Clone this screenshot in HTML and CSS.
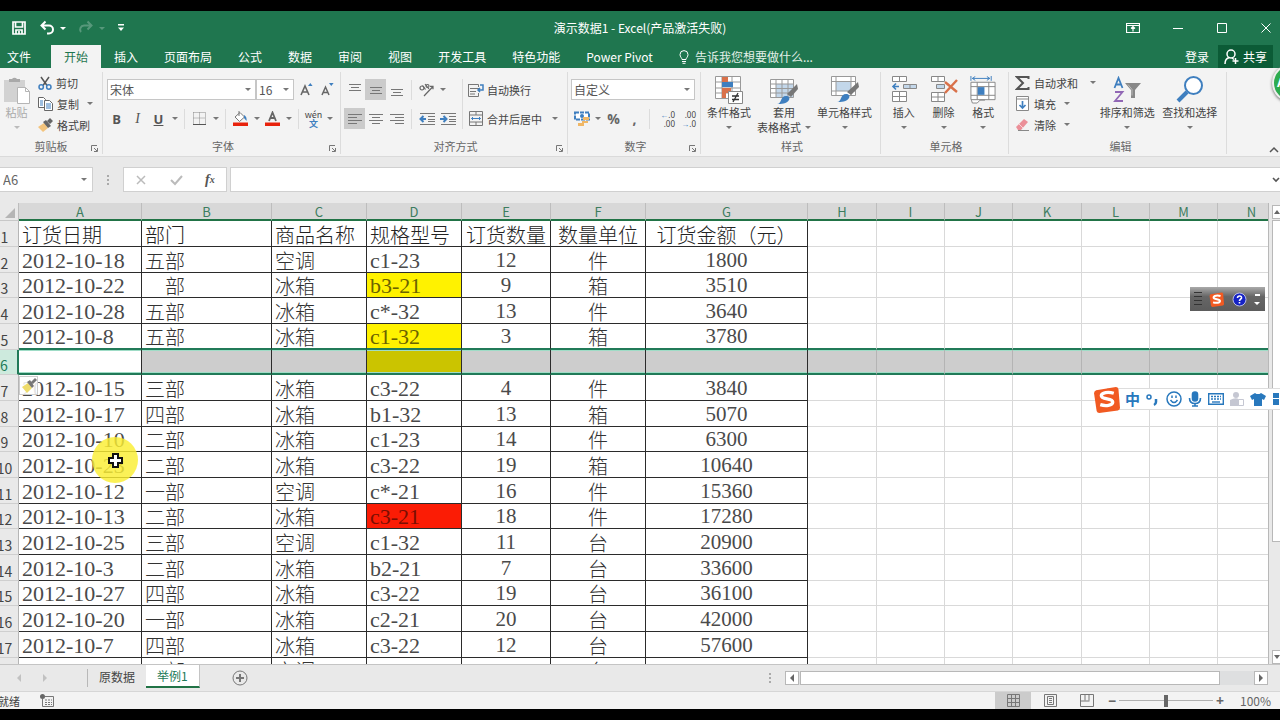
FILE: index.html
```html
<!DOCTYPE html>
<html lang="zh-CN">
<head>
<meta charset="utf-8">
<title>演示数据1 - Excel</title>
<link rel="stylesheet" href="styles.css">
</head>
<body>
<div class="app">
  <header class="top">
    <div class="titlebar">
      <div class="quick">
        <button aria-label="保存"><svg width="16" height="16" viewBox="0 0 16 16" fill="none" stroke="#fff" stroke-width="1.7"><path d="M2 2h12v12H2zM4.500 2v5h7V2M5 14v-4h6v4M8 11v3"/></svg></button>
        <button aria-label="撤消"><svg width="16" height="16" viewBox="0 0 16 16" fill="none" stroke="#fff" stroke-width="2"><path d="M6.500 1.500 2.500 5.500l4 4M3 5.500h7a4 4 0 0 1 0 8H8"/></svg><i class="ar"></i></button>
        <button aria-label="恢复" class="off"><svg width="16" height="16" viewBox="0 0 16 16" fill="none" stroke="#fff" stroke-width="2"><path d="m9.500 1.500 4 4-4 4M13 5.500H6a4 4 0 0 0-3 6.500"/></svg><i class="ar"></i></button>
        <button aria-label="自定义快速访问工具栏"><svg width="8" height="8" viewBox="0 0 8 8" fill="#fff"><path d="M1 0h6v1.500H1zM1 3.500h6L4 7z"/></svg></button>
      </div>
      <h1>演示数据1 - Excel(产品激活失败)</h1>
      <div class="win">
        <button aria-label="功能区显示选项"><svg width="14" height="12" viewBox="0 0 14 12" fill="none" stroke="#fff"><path d="M.5 1.500h13v9H.5zM.5 3.500h13M7 9.500v-5M5 6.500l2-2 2 2" stroke-width="1.200"/></svg></button>
        <button aria-label="最小化"><svg width="12" height="12" viewBox="0 0 12 12" stroke="#fff"><path d="M1 6.500h10"/></svg></button>
        <button aria-label="最大化"><svg width="12" height="12" viewBox="0 0 12 12" fill="none" stroke="#fff"><path d="M1.500 1.500h9v9h-9z"/></svg></button>
        <button aria-label="关闭"><svg width="12" height="12" viewBox="0 0 12 12" stroke="#fff"><path d="m1.500 1.500 9 9m0-9-9 9"/></svg></button>
      </div>
    </div>
    <nav class="tabs">
      <button class="file">文件</button><button class="on">开始</button><button>插入</button><button>页面布局</button><button>公式</button><button>数据</button><button>审阅</button><button>视图</button><button>开发工具</button><button>特色功能</button><button>Power Pivot</button>
      <button class="tell"><svg width="10" height="14" viewBox="0 0 10 14" fill="none" stroke="#fff"><path d="M3 9.500C3 8 1 7 1 4.600a4 4 0 0 1 8 0C9 7 7 8 7 9.500zM3 11.500h4M3.500 13.300h3"/></svg>告诉我您想要做什么...</button>
      <button class="login">登录</button>
      <button class="share"><svg width="15" height="16" viewBox="0 0 15 16" fill="none" stroke="#fff" stroke-width="1.500"><circle cx="7" cy="5" r="4"/><path d="M1 15c0-4 2-6 4.500-6.500M8 9l2 1.500M11.500 9v6M8.500 12h6"/></svg>共享</button>
    </nav>
  </header>

  <section class="ribbon">
    <div class="grp">
      <div class="body">
        <button class="big paste"><svg width="28" height="28" viewBox="0 0 28 28"><path d="M1 4h21v22H1z" fill="#d2d2d2"/><path d="M6 6V3h3a3 3 0 0 1 5 0h3v3z" fill="#a9a9a9"/><path d="M14.500 11.500h8l4 4v12h-12z" fill="#fff" stroke="#b5b5b5"/><path d="M22.500 11.500v4h4" fill="none" stroke="#b5b5b5"/></svg><span>粘贴</span><i class="ar"></i></button>
        <div class="stack">
          <button><svg width="14" height="14" viewBox="0 0 14 14" fill="none" stroke-width="1.500"><path d="m3 1 6 8.500M11 1 5 9.500" stroke="#555"/><circle cx="3.200" cy="11" r="2.200" stroke="#3f7fbf"/><circle cx="10.800" cy="11" r="2.200" stroke="#3f7fbf"/></svg>剪切</button>
          <button><svg width="15" height="14" viewBox="0 0 15 14" fill="#fff" stroke="#666"><path d="M.5.5h5l2 2v8h-7z"/><path d="M2 4h3M2 6h3M2 8h3" stroke="#3f7fbf"/><path d="M6.500 3.500h5l3 3v7h-8z"/><path d="M8 7h5M8 9h5M8 11h5" stroke="#3f7fbf"/></svg>复制<i class="ar"></i></button>
          <button><svg width="15" height="14" viewBox="0 0 15 14"><path d="m0 9 6-4 4 5-5 4z" fill="#f3c47d"/><path d="m5 4 3-2 5 6-3 2zM9 3l3-3 3 3-3 3z" fill="#666"/></svg>格式刷</button>
        </div>
      </div>
      <div class="cap">剪贴板<svg class="dl" viewBox="0 0 7 7"><path d="M.5 6V.5H6M3 3l3 3M6.500 3v3.500H3"/></svg></div>
    </div>

    <div class="grp g-font">
      <div class="body rows">
        <div class="row">
          <label class="combo c-font"><select aria-label="字体"><option>宋体</option></select><i class="ar"></i></label>
          <label class="combo c-size"><select aria-label="字号"><option>16</option></select><i class="ar"></i></label>
          <button class="b" aria-label="增大字号"><svg width="13" height="13" viewBox="0 0 13 13"><path d="M1 12 5 3l4 9M2.500 9h5" fill="none" stroke="#666" stroke-width="1.600"/><path d="m8 3 2.300-3L12.600 3z" fill="#3f7fbf"/></svg></button>
          <button class="b" aria-label="减小字号"><svg width="13" height="13" viewBox="0 0 13 13"><path d="m1 12 3.500-8L8 12M2.300 9.500h4.500" fill="none" stroke="#666" stroke-width="1.500"/><path d="m8 0 2.300 3L12.600 0z" fill="#3f7fbf"/></svg></button>
        </div>
        <div class="row">
          <button class="b bold">B</button><button class="b ital">I</button><button class="b under">U</button><button class="a" aria-label="下划线"><i class="ar"></i></button><i class="sep"></i>
          <button class="b" aria-label="边框"><svg width="13" height="13" viewBox="0 0 13 13" fill="none" stroke="#888"><path d="M.5.5v11M6.500.5v11M12.500.5v11M.5.5h12M.5 6h12" stroke-dasharray="1 1"/><path d="M0 12.500h13" stroke="#555"/></svg></button><button class="a" aria-label="更多边框"><i class="ar"></i></button><i class="sep"></i>
          <button class="b" aria-label="填充颜色"><svg width="15" height="15" viewBox="0 0 15 15"><path d="m2 6 5-4.500 4.500 4.500-5 4.500z" fill="#fff" stroke="#777"/><path d="M6 0v5" stroke="#777"/><path d="M11 4c2 1 3 3 2.500 6L11 7z" fill="#3f7fbf"/><path d="M0 11.500h15V15H0z" fill="#e8220c"/></svg></button><button class="a" aria-label="更多填充"><i class="ar"></i></button>
          <button class="b" aria-label="字体颜色"><svg width="15" height="15" viewBox="0 0 15 15"><path d="m4 10 3.500-8.500L11 10M5 7h5" fill="none" stroke="#666" stroke-width="1.800"/><path d="M0 11.500h15V15H0z" fill="#e8220c"/></svg></button><button class="a" aria-label="更多颜色"><i class="ar"></i></button><i class="sep"></i>
          <button class="b wen"><span>wén</span><span>文</span></button><button class="a" aria-label="拼音"><i class="ar"></i></button>
        </div>
      </div>
      <div class="cap">字体<svg class="dl" viewBox="0 0 7 7"><path d="M.5 6V.5H6M3 3l3 3M6.500 3v3.500H3"/></svg></div>
    </div>

    <div class="grp g-align">
      <div class="body">
        <div class="rows">
          <div class="row">
            <button class="b" aria-label="顶端对齐"><svg class="ln" viewBox="0 0 14 14"><path d="M1 1.500h12M3 4.500h8M1 7.500h12"/></svg></button><button class="b sel" aria-label="垂直居中"><svg class="ln" viewBox="0 0 14 14"><path d="M1 4.500h12M3 7.500h8M1 10.500h12"/></svg></button><button class="b" aria-label="底端对齐"><svg class="ln" viewBox="0 0 14 14"><path d="M1 6.500h12M3 9.500h8M1 12.500h12"/></svg></button><i class="sep"></i>
            <button class="b" aria-label="方向"><svg width="15" height="14" viewBox="0 0 15 14" fill="none" stroke="#666" stroke-width="1.200"><circle cx="3" cy="5" r="2"/><path d="m3.500 2.500 3 4"/><path d="m6 1 4 5"/><circle cx="8.500" cy="3" r="1.500"/><path d="M5 13 14 3.500M11 3.300h3v3"/></svg></button><button class="a" aria-label="更多方向"><i class="ar"></i></button>
          </div>
          <div class="row">
            <button class="b sel" aria-label="左对齐"><svg class="ln" viewBox="0 0 14 14"><path d="M0 2.500h14M0 5.500h9M0 8.500h14M0 11.500h9"/></svg></button><button class="b" aria-label="居中"><svg class="ln" viewBox="0 0 14 14"><path d="M0 2.500h14M3 5.500h8M0 8.500h14M3 11.500h8"/></svg></button><button class="b" aria-label="右对齐"><svg class="ln" viewBox="0 0 14 14"><path d="M0 2.500h14M5 5.500h9M0 8.500h14M5 11.500h9"/></svg></button><i class="sep"></i>
            <button class="b" aria-label="减少缩进"><svg width="16" height="14" viewBox="0 0 16 14" fill="none" stroke="#777"><path d="M1 1.500h15M9 4.500h7M9 7.500h7M9 9.500h7M1 12.500h15"/><path d="M7 7H2M4.500 4 1.500 7l3 3" stroke="#3f7fbf" stroke-width="2"/></svg></button><button class="b" aria-label="增加缩进"><svg width="16" height="14" viewBox="0 0 16 14" fill="none" stroke="#777"><path d="M1 1.500h15M9 4.500h7M9 7.500h7M9 9.500h7M1 12.500h15"/><path d="M0 7h6M3.500 4l3 3-3 3" stroke="#3f7fbf" stroke-width="2"/></svg></button>
          </div>
        </div>
        <i class="sep tall"></i>
        <div class="rows">
          <div class="row"><button class="txt"><svg width="16" height="14" viewBox="0 0 16 14" fill="none" stroke="#777"><path d="M.5 1v12.500h10V10M.5 1.500h10V4"/><path d="M2 5.500h9M2 8.500h6M2 11h5"/><path d="M12 2h3v5h-5m2-2-2 2 2 2" stroke="#3f7fbf" stroke-width="1.500"/></svg>自动换行</button></div>
          <div class="row"><button class="txt"><svg width="16" height="15" viewBox="0 0 16 15" fill="none" stroke="#777"><path d="M1.500.5h13v14h-13zM1.500 4h13M1.500 11h13M8 .5V4M8 11v3.500"/><path d="M3.500 7.500h9M5 6 3.500 7.500 5 9M11 6l1.500 1.500L11 9" stroke="#3f7fbf"/></svg>合并后居中<i class="ar"></i></button></div>
        </div>
      </div>
      <div class="cap">对齐方式<svg class="dl" viewBox="0 0 7 7"><path d="M.5 6V.5H6M3 3l3 3M6.500 3v3.500H3"/></svg></div>
    </div>

    <div class="grp g-num">
      <div class="body rows">
        <div class="row"><label class="combo c-num"><select aria-label="数字格式"><option>自定义</option></select><i class="ar"></i></label></div>
        <div class="row">
          <button class="b" aria-label="会计数字格式"><svg width="16" height="15" viewBox="0 0 16 15"><path d="M1 1.500h14v7H1z" fill="#fff" stroke="#3f7fbf" stroke-width="2" stroke-dasharray="4 1"/><circle cx="8" cy="5" r="2" fill="#3f7fbf"/><path d="M9 6h6v3H9zM8 10h6v2H8zM4 12h6v3H4z" fill="#f0b765"/></svg></button><button class="a" aria-label="更多货币"><i class="ar"></i></button><button class="b pct">%</button><button class="b pct">,</button><i class="sep"></i>
          <button class="b dec"><span><em>←</em>.0</span><span>.00</span></button><button class="b dec"><span>.00</span><span><em>→</em>.0</span></button>
        </div>
      </div>
      <div class="cap">数字<svg class="dl" viewBox="0 0 7 7"><path d="M.5 6V.5H6M3 3l3 3M6.500 3v3.500H3"/></svg></div>
    </div>

    <div class="grp g-style">
      <div class="body">
        <button class="big"><svg width="30" height="28" viewBox="0 0 30 28"><path d="M1.500.5h25v22h-25zM8 .5v22M18 .5v22M1.500 6h25M1.500 12h25M1.500 17h25" fill="#fff" stroke="#999"/><path d="M8 1h6v5H8zM8 12h9v5H8zM8 17h4v5H8z" fill="#d9714a"/><path d="M8 6h11v5H8z" fill="#3f7fbf"/><path d="M14.500 15.500h14v12h-14z" fill="#fff" stroke="#888"/><path d="M18 20h7M18 23.500h7M24 17l-5 9" stroke="#333" stroke-width="1.300"/></svg><span>条件格式</span><i class="ar"></i></button>
        <button class="big"><svg width="30" height="28" viewBox="0 0 30 28"><path d="M1.500 3.500h23v18h-23z" fill="#fff"/><path d="M7 8h17v13H7z" fill="#c3d7ea"/><path d="M1.500 3.500h23v18h-23zM1.500 8h23M1.500 12.500h23M1.500 17h23M7 3.500v18M13 3.500v18M19 3.500v18" fill="none" stroke="#999"/><path d="m18 18 10-10 1 5-7 8z" fill="#777"/><path d="M8 28c5 0 3-8 9-8 3 0 4 2 3 4-2 4-8 4-12 4z" fill="#3f7fbf"/></svg><span>套用</span><span class="inl">表格格式<i class="ar"></i></span></button>
        <button class="big"><svg width="30" height="28" viewBox="0 0 30 28"><path d="M1.500.5h24v19h-24z" fill="#fff"/><path d="M6 6h15v9H6z" fill="#c3d7ea"/><path d="M1.500.5h24v19h-24zM1.500 5.500h24M1.500 15h24M6 .5v19M21 .5v19" fill="none" stroke="#999"/><path d="m17 16 11-10 1 5-8 8z" fill="#777"/><path d="M7 26c5 0 3-8 9-8 3 0 4 2 3 4-2 4-8 4-12 4z" fill="#3f7fbf"/></svg><span>单元格样式</span><i class="ar"></i></button>
      </div>
      <div class="cap">样式</div>
    </div>

    <div class="grp g-cell">
      <div class="body">
        <button class="big"><svg width="28" height="28" viewBox="0 0 28 28" fill="#fff" stroke="#888"><path d="M2.500.5h14v5h-14zM9.500.5v5M2.500 15.500h14v10h-14zM2.500 20.500h14M9.500 15.500v10"/><path d="M13.500 8.500h13v4h-13zM20 8.500v4" fill="#c3d7ea"/><path d="M9 10.500H3M6 7.500l-3 3 3 3" fill="none" stroke="#3f7fbf" stroke-width="1.600"/></svg><span>插入</span><i class="ar"></i></button>
        <button class="big"><svg width="28" height="28" viewBox="0 0 28 28" fill="#fff" stroke="#888"><path d="M1.500.5h13v5h-13zM8 .5v5M1.500 16.500h13v9h-13zM1.500 21h13M8 16.500v9"/><path d="M6.500 8.500h8v4h-8z" fill="#c3d7ea"/><path d="m15 6 12 10M27 4 15 17" fill="none" stroke="#d9714a" stroke-width="2.400"/></svg><span>删除</span><i class="ar"></i></button>
        <button class="big"><svg width="28" height="28" viewBox="0 0 28 29" fill="#fff" stroke="#888"><path d="M1.500 6.500h25v18h-25zM8 6.500v18M20 6.500v18M1.500 11h25M1.500 20h25M2 25l1 3h5l3-3h5"/><path d="M8.500 11.500h7v8h-7z" fill="#3f7fbf" stroke="none"/><path d="M1.500 0v5M22.500 0v5M3 2.500h18M6 .5l-3 2 3 2M18 .5l3 2-3 2" fill="none" stroke="#3f7fbf"/></svg><span>格式</span><i class="ar"></i></button>
      </div>
      <div class="cap">单元格</div>
    </div>

    <div class="grp g-edit">
      <div class="body">
        <div class="stack">
          <button><svg width="15" height="14" viewBox="0 0 15 14" fill="none" stroke="#555" stroke-width="2"><path d="M13.500 3V1H2l6 6-6 6h11.500v-2"/></svg>自动求和<i class="ar far"></i></button>
          <button><svg width="15" height="15" viewBox="0 0 15 15" fill="#fff" stroke="#888"><path d="M1.500.5h12v14h-12zM1.500 3h12"/><path d="M7.500 5v7M4.500 9l3 3 3-3" fill="none" stroke="#3f7fbf" stroke-width="1.700"/></svg>填充<i class="ar"></i></button>
          <button><svg width="15" height="13" viewBox="0 0 15 13"><path d="m1 9 8-8 4 3-7 8H3z" fill="#eb8f98"/><path d="M3 12.500h11" stroke="#888"/><path d="m4 6 4 4" stroke="#f8d5d8"/></svg>清除<i class="ar"></i></button>
        </div>
        <button class="big"><svg width="28" height="28" viewBox="0 0 28 28" fill="none" stroke-width="1.800"><path d="m1.500 12 4-10 4 10M3 8.500h5" stroke="#3f7fbf"/><path d="M2 16h7.500L2 25h8" stroke="#9167b5"/><path d="M12 7h16l-6 7v8h-4v-8z" fill="#888"/><path d="m15 8.500 4 5v6" stroke="#bbb" stroke-width="1"/></svg><span>排序和筛选</span><i class="ar"></i></button>
        <button class="big"><svg width="28" height="28" viewBox="0 0 28 28" fill="#fff" stroke="#3f7fbf"><path d="m2 25 9-9" stroke-width="4"/><circle cx="17.500" cy="9.500" r="8.500" stroke-width="2"/></svg><span>查找和选择</span><i class="ar"></i></button>
      </div>
      <div class="cap">编辑</div>
    </div>
    <button class="fold" aria-label="折叠功能区"><svg width="10" height="7" viewBox="0 0 10 7" fill="none" stroke="#555" stroke-width="1.500"><path d="m1 6 4-4 4 4"/></svg></button>
  </section>

  <section class="fbar">
    <label class="namebox"><input value="A6" aria-label="名称框"><i class="ar"></i></label>
    <i class="dots"></i>
    <div class="fx">
      <button aria-label="取消"><svg width="12" height="12" viewBox="0 0 12 12" stroke="#bbb" stroke-width="1.500"><path d="m2 2 8 8m0-8-8 8"/></svg></button>
      <button aria-label="输入"><svg width="13" height="12" viewBox="0 0 13 12" fill="none" stroke="#bbb" stroke-width="2"><path d="m1 6 4 4 7-8"/></svg></button>
      <button class="fn">f<sub>x</sub></button>
    </div>
    <label class="formula"><input aria-label="编辑栏"><svg width="8" height="6" viewBox="0 0 8 6" fill="none" stroke="#555" stroke-width="1.600"><path d="m1 1 3 3 3-3"/></svg></label>
  </section>

  <main class="work">
    <div class="sheet">
      <table>
        <colgroup><col class="w0"><col class="wa"><col class="wb"><col class="wc"><col class="wc"><col class="we"><col class="wc"><col class="wg"><col class="wk"><col class="wh"><col class="wh"><col class="wk"><col class="wh"><col class="wh"><col class="wh"></colgroup>
        <thead><tr><th class="corner"><i></i></th><th>A</th><th>B</th><th>C</th><th>D</th><th>E</th><th>F</th><th>G</th><th>H</th><th>I</th><th>J</th><th>K</th><th>L</th><th>M</th><th>N</th></tr></thead>
        <tbody>
        <tr class="head"><th>1</th><td>订货日期</td><td>部门</td><td>商品名称</td><td>规格型号</td><td>订货数量</td><td>数量单位</td><td>订货金额（元）</td><td></td><td></td><td></td><td></td><td></td><td></td><td></td></tr>
        <tr><th>2</th><td>2012-10-18</td><td>五部</td><td>空调</td><td>c1-23</td><td>12</td><td>件</td><td>1800</td><td></td><td></td><td></td><td></td><td></td><td></td><td></td></tr>
        <tr><th>3</th><td>2012-10-22</td><td>　部</td><td>冰箱</td><td class="yellow">b3-21</td><td>9</td><td>箱</td><td>3510</td><td></td><td></td><td></td><td></td><td></td><td></td><td></td></tr>
        <tr><th>4</th><td>2012-10-28</td><td>五部</td><td>冰箱</td><td>c*-32</td><td>13</td><td>件</td><td>3640</td><td></td><td></td><td></td><td></td><td></td><td></td><td></td></tr>
        <tr class="above"><th>5</th><td>2012-10-8</td><td>五部</td><td>冰箱</td><td class="yellow">c1-32</td><td>3</td><td>箱</td><td>3780</td><td></td><td></td><td></td><td></td><td></td><td></td><td></td></tr>
        <tr class="picked"><th>6</th><td></td><td></td><td></td><td class="yellow"></td><td></td><td></td><td></td><td></td><td></td><td></td><td></td><td></td><td></td><td></td></tr>
        <tr><th>7</th><td>2012-10-15</td><td>三部</td><td>冰箱</td><td>c3-22</td><td>4</td><td>件</td><td>3840</td><td></td><td></td><td></td><td></td><td></td><td></td><td></td></tr>
        <tr><th>8</th><td>2012-10-17</td><td>四部</td><td>冰箱</td><td>b1-32</td><td>13</td><td>箱</td><td>5070</td><td></td><td></td><td></td><td></td><td></td><td></td><td></td></tr>
        <tr><th>9</th><td>2012-10-10</td><td>二部</td><td>冰箱</td><td>c1-23</td><td>14</td><td>件</td><td>6300</td><td></td><td></td><td></td><td></td><td></td><td></td><td></td></tr>
        <tr><th>10</th><td>2012-10-23</td><td>二部</td><td>冰箱</td><td>c3-22</td><td>19</td><td>箱</td><td>10640</td><td></td><td></td><td></td><td></td><td></td><td></td><td></td></tr>
        <tr><th>11</th><td>2012-10-12</td><td>一部</td><td>空调</td><td>c*-21</td><td>16</td><td>件</td><td>15360</td><td></td><td></td><td></td><td></td><td></td><td></td><td></td></tr>
        <tr><th>12</th><td>2012-10-13</td><td>二部</td><td>冰箱</td><td class="red">c3-21</td><td>18</td><td>件</td><td>17280</td><td></td><td></td><td></td><td></td><td></td><td></td><td></td></tr>
        <tr><th>13</th><td>2012-10-25</td><td>三部</td><td>空调</td><td>c1-32</td><td>11</td><td>台</td><td>20900</td><td></td><td></td><td></td><td></td><td></td><td></td><td></td></tr>
        <tr><th>14</th><td>2012-10-3</td><td>二部</td><td>冰箱</td><td>b2-21</td><td>7</td><td>台</td><td>33600</td><td></td><td></td><td></td><td></td><td></td><td></td><td></td></tr>
        <tr><th>15</th><td>2012-10-27</td><td>四部</td><td>冰箱</td><td>c3-22</td><td>19</td><td>台</td><td>36100</td><td></td><td></td><td></td><td></td><td></td><td></td><td></td></tr>
        <tr><th>16</th><td>2012-10-20</td><td>一部</td><td>冰箱</td><td>c2-21</td><td>20</td><td>台</td><td>42000</td><td></td><td></td><td></td><td></td><td></td><td></td><td></td></tr>
        <tr><th>17</th><td>2012-10-7</td><td>四部</td><td>冰箱</td><td>c3-22</td><td>12</td><td>台</td><td>57600</td><td></td><td></td><td></td><td></td><td></td><td></td><td></td></tr>
        <tr><th></th><td></td><td>二部</td><td>空调</td><td></td><td></td><td>台</td><td></td><td></td><td></td><td></td><td></td><td></td><td></td><td></td></tr>
        </tbody>
      </table>
      <button class="opts" aria-label="插入选项"><svg width="16" height="16" viewBox="0 0 16 16"><path d="m1 9 6-4 4 5-5 5z" fill="#eedb6a"/><path d="m6 4 3-2 4 6-2 2zM10 4l4-4 2 2-4 4z" fill="#777"/></svg></button>
      <div class="halo"><svg width="17" height="17" viewBox="0 0 17 17"><path d="M6 2h5v4h4v5h-4v4H6v-4H2V6h4z" fill="#fff" stroke="#111" stroke-width="2"/></svg></div>
    </div>
    <div class="vbar"><button class="up" aria-label="向上滚动"></button><div class="vthumb"></div><button class="down" aria-label="向下滚动"></button></div>
  </main>

  <div class="sheets">
    <button class="nav" aria-label="上一个"><i class="lt pale"></i></button><button class="nav" aria-label="下一个"><i class="rt pale"></i></button>
    <i class="bar"></i>
    <button class="stab">原数据</button><button class="stab cur">举例1</button>
    <button class="add" aria-label="新工作表"><svg width="16" height="16" viewBox="0 0 16 16" fill="none" stroke="#777"><circle cx="8" cy="8" r="7"/><path d="M8 4v8M4 8h8" stroke-width="2"/></svg></button>
    <i class="dots"></i>
    <div class="hbar"><button aria-label="向左滚动"><i class="lt"></i></button><div class="hthumb"></div><button aria-label="向右滚动"><i class="rt"></i></button></div>
  </div>

  <footer class="status">
    <span class="ready">就绪</span>
    <svg width="14" height="13" viewBox="0 0 14 13" fill="none" stroke="#777"><path d="M2.500 5v7.500h11v-10H7M5 2.500h8"/><path d="M5 6h7M5 8.500h7M5 10.500h7" stroke-dasharray="2 1"/><circle cx="2.500" cy="2.500" r="2.500" fill="#666" stroke="none"/></svg>
    <div class="views">
      <button class="sel" aria-label="普通"><svg width="13" height="13" viewBox="0 0 13 13" fill="none" stroke="#777"><path d="M.5.5h12v12H.5zM.5 4.500h12M.5 8.500h12M4.500.5v12M8.500.5v12"/></svg></button>
      <button aria-label="页面布局"><svg width="13" height="13" viewBox="0 0 13 13" fill="none" stroke="#777"><path d="M.5.5h12v12H.5zM3.500 2.500h6v8h-6zM5 4.500h3M5 6.500h3M5 8.500h3"/></svg></button>
      <button aria-label="分页预览"><svg width="14" height="13" viewBox="0 0 14 13" fill="none" stroke="#777"><path d="M.5.5h13v12H.5zM5 .5v6M9 .5v6M.5 7h9"/></svg></button>
    </div>
    <button class="zb">−</button><input class="zoom" type="range" min="0" max="200" value="100" aria-label="缩放"><button class="zb">+</button>
    <span class="pc">100%</span>
  </footer>
</div>

<div class="ball">A</div>
<div class="langbar"><i class="grip"></i>
  <svg width="15" height="15" viewBox="0 0 26 26"><path d="M3 4 22 1q2 0 2.500 2L26 21q0 2-2 2.500L6 26q-2 0-2.500-2L1 7q0-2 2-3z" fill="#f15a22"/><path d="M20 7c-5-1.500-12-1-12 2.500 0 4 11 2 11 6 0 3.500-7 4-12 2.500" fill="none" stroke="#fff" stroke-width="3.500"/></svg>
  <svg width="15" height="15" viewBox="0 0 15 15"><circle cx="7.500" cy="7.500" r="6.500" fill="#1522c4" stroke="#b9bce8"/><path d="M5.500 6c0-3 4.500-2.500 4 0-.3 1.200-2 1.300-2 3M7.500 10v1.600" fill="none" stroke="#fff" stroke-width="1.600"/></svg>
  <svg width="6" height="13" viewBox="0 0 6 13" fill="#fff"><path d="M1 1h5v2H1zM0 9h6l-3 3z"/></svg>
</div>
<div class="ime">
  <svg class="logo" width="27" height="27" viewBox="0 0 26 26"><path d="M3 4 22 1q2 0 2.500 2L26 21q0 2-2 2.500L6 26q-2 0-2.500-2L1 7q0-2 2-3z" fill="#f15a22"/><path d="M20 7c-5-1.500-12-1-12 2.500 0 4 11 2 11 6 0 3.500-7 4-12 2.500" fill="none" stroke="#fff" stroke-width="3.200"/></svg>
  <b>中</b>
  <svg viewBox="0 0 16 16" fill="none" stroke="#2878bd" stroke-width="1.500"><circle cx="4" cy="6" r="2"/><path d="M11 8v3q0 2-2 3" stroke-width="2.500"/></svg>
  <svg viewBox="0 0 16 16" fill="none" stroke="#2878bd" stroke-width="1.500"><circle cx="8" cy="8" r="7"/><path d="M4.500 9q3.500 5 7 0M6 4.500v2.500M10 4.500v2.500"/></svg>
  <svg viewBox="0 0 16 16" fill="none" stroke="#2878bd" stroke-width="1.600"><rect x="5.500" y="1" width="5" height="9" rx="2.500" fill="#2878bd"/><path d="M2.500 7q0 5.500 5.500 5.500T13.500 7M8 12v3M5 15h6"/></svg>
  <svg viewBox="0 0 16 16" fill="none" stroke="#2878bd"><path d="M.7 2.700h14.600v10.600H.7z" stroke-width="1.400"/><path d="M3 5.500h10M3 8h10" stroke-width="1.600" stroke-dasharray="2 1"/><path d="M4 11h8" stroke-width="1.400"/></svg>
  <svg viewBox="0 0 16 16" fill="#c5c7d2"><circle cx="7" cy="4" r="3"/><path d="M1 15V9q6-3 9-.5V15z"/><path d="M9.500 8.500h5v6h-5z" fill="#fff" stroke="#c5c7d2"/></svg>
  <svg viewBox="0 0 16 16" fill="#2878bd"><path d="m5 2 1.500 1h3L11 2l5 3-2 4-2-1v7H4V8L2 9 0 5z"/></svg>
  <svg viewBox="0 0 16 16" fill="#2878bd"><path d="M2 2h6v5H2zM9 2h6v5H9zM2 8h6v6H2zM9 8h6v6H9z"/></svg>
</div>
</body>
</html>
```

FILE: styles.css
```css
* { box-sizing: border-box; }
html, body { height: 100%; margin: 0; }
body {
  background: #000;
  color: #444;
  font: 11px/14px "Noto Sans CJK SC", sans-serif;
  overflow: hidden;
  position: relative;
}
button, input, select { font: inherit; color: inherit; border: 0; padding: 0; margin: 0; background: none; }
button { display: flex; align-items: center; justify-content: center; white-space: nowrap; }
select { appearance: none; outline: 0; }
input { outline: 0; min-width: 0; }
svg { display: block; flex: none; }
.app { height: 100%; padding: 11px 0; display: flex; flex-direction: column; }
.ar { flex: none; border: 3px solid transparent; border-top-color: #777; border-bottom: 0; }

/* title and tabs */
.top { background: #1f764f; color: #fff; font-size: 12px; }
.titlebar { height: 34px; display: grid; grid-template-columns: 1fr auto 1fr; align-items: center; }
.titlebar h1 { margin: 0; font-size: 12px; font-weight: 400; }
.quick { display: flex; align-items: center; padding-left: 11px; gap: 12px; }
.quick button { gap: 5px; }
.quick .ar { border-top-color: #fff; }
.quick .off { opacity: .25; }
.win { display: flex; justify-content: flex-end; padding-right: 8px; gap: 32px; }
.tabs { display: flex; height: 23px; }
.tabs button { padding: 0 13px; }
.tabs .file { padding: 0 7px; margin-right: 13px; }
.tabs .on { background: #f3f3f3; color: #1f764f; }
.tabs .tell { gap: 6px; color: #e3f0e9; }
.tabs .login { margin-left: auto; padding: 0 9px; }
.tabs .share { background: #0b5b36; padding: 0 6px; gap: 4px; margin-right: 7px; }

/* ribbon */
.ribbon { display: flex; height: 89px; background: #f3f3f3; border-bottom: 1px solid #dadada; padding: 4px 0 2px; }
.grp { display: flex; flex-direction: column; border-right: 1px solid #dcdcdc; width: 103px; }
.g-font { width: 238px; padding-left: 3px; }
.g-align { width: 227px; padding-left: 3px; }
.g-num { width: 133px; padding-left: 3px; }
.g-style { width: 180px; padding-left: 3px; }
.g-cell { width: 128px; padding-left: 3px; }
.g-edit { width: 218px; padding-left: 6px; }
.g-style .body, .g-cell .body, .g-edit .body { padding-right: 5px; }
.body { flex: 1; display: flex; }
.cap { height: 16px; display: grid; grid-template-columns: 1fr auto 1fr; align-items: center; color: #666; }
.cap::before { content: ""; }
.dl { width: 7px; height: 7px; justify-self: end; align-self: end; margin: 0 4px 2px 0; fill: none; stroke: #777; }
.rows { display: flex; flex-direction: column; gap: 8px; padding-top: 7px; }
.row { display: flex; align-items: center; height: 21px; }
.b { width: 21px; height: 21px; }
.a { width: 11px; height: 21px; }
.sel { background: #cbcbcb; }
.sep { width: 1px; height: 20px; margin: 0 4px; background: #dcdcdc; }
.tall { height: 50px; margin: 7px 5px 0 4px; }
.ln { width: 14px; height: 14px; fill: none; stroke: #777; }
.bold { font: 700 13px "Open Sans", sans-serif; color: #555; }
.ital { font: italic 14px "Liberation Serif", serif; color: #555; }
.under { font: 700 13px "Open Sans", sans-serif; color: #555; text-decoration: underline; }
.wen { flex-direction: column; font-size: 9px; line-height: 9px; }
.wen span + span { color: #3f7fbf; font-weight: 700; }
.pct { font: 700 14px "Open Sans", sans-serif; color: #666; }
.dec { flex-direction: column; align-items: flex-end; font: 8px/9px "Noto Sans", sans-serif; }
.dec em { color: #3f7fbf; font-style: normal; }
.txt { gap: 3px; }
.txt .ar { margin-left: 7px; }
.combo { display: grid; height: 21px; background: #fff; border: 1px solid #c6c6c6; align-items: center; font-size: 12px; color: #555; }
.combo select { grid-area: 1 / 1; width: 100%; padding-left: 2px; }
.combo .ar { grid-area: 1 / 1; justify-self: end; margin-right: 4px; pointer-events: none; }
.c-font { width: 149px; margin-left: 1px; }
.c-size { width: 38px; margin-right: 2px; }
.c-num { width: 124px; }
.big { flex-direction: column; justify-content: flex-start; flex: 1 1 auto; padding-top: 4px; }
.big span { margin-top: 1px; line-height: 14px; }
.big span + .ar { margin-top: 7px; }
.big .inl { display: flex; align-items: center; gap: 4px; margin-top: 1px; }
.paste { flex: none; width: 33px; color: #aaa; }
.paste .ar { border-top-color: #bbb; }
.stack { display: flex; flex-direction: column; padding-left: 5px; }
.g-edit .stack { padding-left: 0; }
.stack button { height: 21px; gap: 4px; justify-content: flex-start; }
.stack .ar { margin-left: 4px; }
.stack .far { margin-left: 8px; }
.fold { margin-left: auto; align-self: flex-end; padding: 0 1px 1px 0; }

/* formula bar */
.fbar { display: flex; height: 46px; background: #e9e9e9; padding: 10px 0 11px; align-items: stretch; }
.namebox { width: 93px; background: #fff; border: 1px solid #d0d0d0; border-left: 0; display: flex; align-items: center; padding: 0 5px 0 3px; font-size: 13px; color: #666; }
.namebox input { flex: 1; }
.dots { width: 2px; height: 10px; margin: 0 14px; align-self: center; background: repeating-linear-gradient(#aaa 0 2px, transparent 2px 4px); }
.fx { width: 104px; background: #fff; border: 1px solid #d0d0d0; display: flex; justify-content: space-around; margin-right: 3px; }
.fn { font: italic 700 14px "Liberation Serif", serif; color: #555; }
.fn sub { font-size: 10px; }
.formula { flex: 1; background: #fff; border: 1px solid #d0d0d0; border-right: 0; display: flex; align-items: center; }
.formula input { flex: 1; }

/* grid */
.work { flex: 1; min-height: 0; display: flex; background: #e9e9e9; }
.sheet { flex: 1; min-width: 0; overflow: hidden; position: relative; background: #fff; border-right: 1px solid #b8b8b8; }
table { table-layout: fixed; border-collapse: separate; border-spacing: 0; width: 1295px; margin-left: -9px; }
.w0 { width: 28px; }
.wa { width: 123px; }
.wb { width: 130px; }
.wc { width: 95px; }
.we { width: 89px; }
.wg { width: 162px; }
.wh { width: 68px; }
.wk { width: 69px; }
th { padding: 0; font-weight: 400; }
thead th { height: 18px; background: #d8d8d8; color: #3d7d5f; font-size: 13px; line-height: 14px; padding-top: 2px; border-right: 1px solid #bdbdbd; border-bottom: 2px solid #217346; }
thead .corner { background: #e9e9e9; border-bottom: 1px solid #c8c8c8; }
.corner i { display: block; width: 0; margin-left: 14px; border: 5px solid transparent; border-right-color: #b5b5b5; border-bottom-color: #b5b5b5; }
tbody tr { height: 26px; }
tbody tr:nth-child(3n) { height: 25px; }
tbody th { background: #e9e9e9; font-size: 14px; line-height: 17px; vertical-align: bottom; color: #444; border-right: 1px solid #b5b5b5; border-bottom: 1px solid #cfcfcf; }
td { padding: 1px 0 0 3px; font-size: 20px; line-height: 23px; font-weight: 300; color: #333; white-space: nowrap; border-right: 1px solid #2b2b2b; border-bottom: 1px solid #2b2b2b; }
td:nth-child(2), td:nth-child(5) { font-family: "Liberation Serif", "Noto Sans CJK SC", serif; font-size: 22px; color: #4a4a4a; }
td:nth-child(6), td:nth-child(8) { font-family: "Liberation Serif", "Noto Sans CJK SC", serif; font-size: 21px; color: #4a4a4a; }
td:nth-child(n+6) { text-align: center; padding: 1px 0 0; }
.head td:nth-child(n) { font-size: 20px; font-family: "Noto Sans CJK SC", sans-serif; color: #222; }
td:nth-child(n+9) { border-color: #d9d9d9; }
td.yellow:nth-child(5) { background: #fff200; color: #6b6300; }
td.red:nth-child(5) { background: #fb1c05; color: #7a0e02; }
.above td, .above td:nth-child(n+9) { border-bottom: 2px solid #217a58; }
.above td:nth-child(n+9) { border-right-color: #d9d9d9; }
.picked td, .picked td:nth-child(n+9) { background: #cdcdcd; border-bottom: 2px solid #217a58; box-shadow: inset 0 1px #9fdcc6, inset 0 -1px #9fdcc6; }
.picked td:nth-child(n+9) { border-right-color: #b4b4b4; }
.picked td.yellow:nth-child(5) { background: #cbc400; }
.picked td:nth-child(2) { background: #fff; }
.picked th { background: #cdeadd; color: #217a58; border-right: 2px solid #217a58; }
.opts { position: absolute; left: 19px; top: 173px; width: 19px; height: 19px; background: rgba(255,255,255,.85); border: 1px solid #ccc; }
.halo { position: absolute; left: 92px; top: 234px; width: 46px; height: 46px; border-radius: 50%; background: rgba(250,238,50,.82); display: flex; align-items: center; justify-content: center; }
.vbar { width: 11px; padding: 2px 0 0 3px; display: flex; flex-direction: column; }
.vbar button { height: 14px; background: #fff; border: 1px solid #b8b8b8; border-right: 0; }
.vbar button::after { content: ""; border: 3px solid transparent; }
.vbar .up::after { border-top: 0; border-bottom: 4px solid #666; }
.vbar .down { margin-top: auto; }
.vbar .down::after { border-bottom: 0; border-top: 4px solid #666; }
.vthumb { flex: 0 1 322px; background: #fff; border: 1px solid #b8b8b8; border-right: 0; margin-top: 1px; }

/* sheet tabs */
.sheets { display: flex; align-items: center; height: 27px; background: #e9e9e9; border-top: 1px solid #c4c4c4; font-size: 12px; }
.nav { width: 26px; }
.nav:first-child { margin-left: 6px; }
.lt, .rt { border: 4px solid transparent; }
.lt { border-left: 0; border-right-color: #666; }
.rt { border-right: 0; border-left-color: #666; }
.pale { opacity: .3; }
.bar { width: 1px; height: 18px; background: #b8b8b8; margin-left: 29px; }
.stab { height: 23px; align-self: flex-start; padding: 0 11px; }
.stab.cur { background: #fff; color: #217a58; border-bottom: 2px solid #217346; border-right: 1px solid #c4c4c4; }
.add { margin-left: 32px; margin-right: auto; }
.hbar { flex: 0 0 483px; height: 14px; display: flex; margin-right: 12px; background: #dedfe0; }
.hbar button { width: 14px; background: #fff; border: 1px solid #b8b8b8; }
.hthumb { flex: 0 1 420px; background: #fff; border: 1px solid #b8b8b8; margin-left: 1px; }
.hbar button:last-child { margin-left: auto; }

/* status bar */
.status { height: 18px; display: flex; align-items: center; background: #f3f3f3; border-top: 1px solid #d6d6d6; overflow: hidden; }
.ready { margin-left: -2px; margin-right: 20px; }
.views { margin-left: auto; display: flex; gap: 1px; align-self: stretch; }
.views button { width: 36px; }
.zb { width: 14px; font: 700 14px "Open Sans", sans-serif; color: #666; }
.zoom { appearance: none; width: 94px; height: 12px; background: linear-gradient(#b0b0b0, #b0b0b0) center / 100% 1px no-repeat; }
.zoom::-webkit-slider-thumb { appearance: none; width: 4px; height: 12px; background: #666; }
.pc { width: 53px; padding-left: 13px; font-size: 12px; color: #666; }

/* floating items over the window */
.ball { position: absolute; right: -30px; top: 64px; width: 38px; height: 38px; border-radius: 50%; background: #2dab4f; border: 2px solid #eee; box-shadow: 0 1px 3px #666; color: #fff; font: 700 12px/34px "Open Sans", sans-serif; padding-left: 3px; }
.langbar { position: absolute; right: 15px; top: 287px; width: 75px; height: 24px; background: linear-gradient(#aaa, #666 40%, #5c5c5c); display: flex; align-items: center; justify-content: space-between; padding: 0 5px 0 4px; }
.grip { width: 8px; height: 14px; background: repeating-linear-gradient(#333 0 1px, transparent 1px 4px); }
.ime { position: absolute; right: -5px; top: 388px; width: 178px; height: 22px; background: #fff; border: 1px solid #ddd; display: flex; align-items: center; gap: 5px; }
.ime svg { width: 16px; height: 16px; }
.ime .logo { width: 27px; height: 27px; margin-left: -15px; }
.ime b { width: 16px; font-size: 15px; line-height: 18px; color: #2878bd; }
```
